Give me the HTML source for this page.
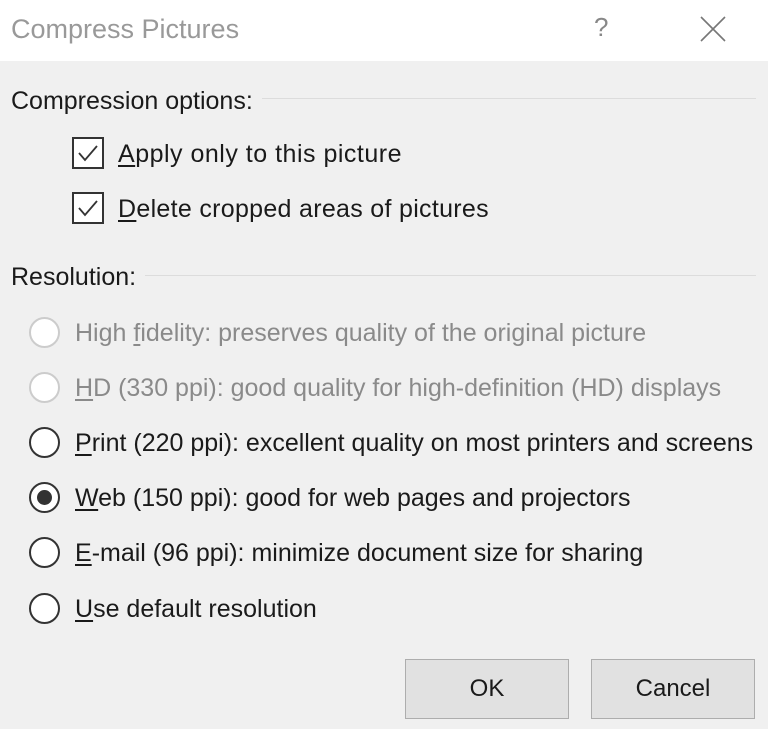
<!DOCTYPE html>
<html><head><meta charset="utf-8"><style>
*{margin:0;padding:0;box-sizing:border-box}
body{width:768px;height:729px;background:#f0f0f0;font-family:"Liberation Sans",sans-serif;color:#1a1a1a;position:relative;overflow:hidden}
.t{position:absolute;font-size:25px;line-height:30px;white-space:nowrap}
.title{position:absolute;left:0;top:0;width:768px;height:61px;background:#fff}
.hr{position:absolute;height:1px;background:#dcdcdc}
.cb{position:absolute;left:72px;width:32px;height:32px;border:2px solid #333;background:#fff}
.r{position:absolute;left:29px;width:31px;height:31px;border:2px solid #333;border-radius:50%;background:#fff}
.r.d{border-color:#ccc}
.g{color:#8a8a8a}
u{text-decoration:underline;text-underline-offset:3px}
.btn{position:absolute;top:659px;height:60px;width:164px;background:#e1e1e1;border:1.5px solid #adadad;font-size:24px;text-align:center;line-height:57px}
</style></head><body>
<div class="title"></div>
<div class="t" style="left:11px;top:14px;color:#999;font-size:27px">Compress Pictures</div>
<div class="t" style="left:594px;top:12px;color:#888;font-size:26px">?</div>
<svg style="position:absolute;left:700px;top:16px" width="26" height="26"><path d="M1 1L25 25M25 1L1 25" stroke="#777" stroke-width="1.6"/></svg>

<div class="t" style="left:11px;top:86px">Compression options:</div>
<div class="hr" style="left:262px;right:12px;top:98px"></div>
<div class="cb" style="top:137px"><svg width="28" height="28"><path d="M5 14L11 21L23 7" stroke="#333" stroke-width="1.8" fill="none"/></svg></div>
<div class="t" style="left:118px;top:139px;letter-spacing:0.5px"><u>A</u>pply only to this picture</div>
<div class="cb" style="top:192px"><svg width="28" height="28"><path d="M5 14L11 21L23 7" stroke="#333" stroke-width="1.8" fill="none"/></svg></div>
<div class="t" style="left:118px;top:194px;letter-spacing:0.3px"><u>D</u>elete cropped areas of pictures</div>

<div class="t" style="left:11px;top:262px">Resolution:</div>
<div class="hr" style="left:145px;right:12px;top:275px"></div>

<div class="r d" style="top:317px"></div>
<div class="t g" style="left:75px;top:318px">High <u>f</u>idelity: preserves quality of the original picture</div>
<div class="r d" style="top:372px"></div>
<div class="t g" style="left:75px;top:373px"><u>H</u>D (330 ppi): good quality for high-definition (HD) displays</div>
<div class="r" style="top:427px"></div>
<div class="t" style="left:75px;top:428px"><u>P</u>rint (220 ppi): excellent quality on most printers and screens</div>
<div class="r" style="top:482px"><div style="position:absolute;left:6px;top:6px;width:15px;height:15px;border-radius:50%;background:#333"></div></div>
<div class="t" style="left:75px;top:483px"><u>W</u>eb (150 ppi): good for web pages and projectors</div>
<div class="r" style="top:537px"></div>
<div class="t" style="left:75px;top:538px"><u>E</u>-mail (96 ppi): minimize document size for sharing</div>
<div class="r" style="top:593px"></div>
<div class="t" style="left:75px;top:594px"><u>U</u>se default resolution</div>

<div class="btn" style="left:405px">OK</div>
<div class="btn" style="left:591px">Cancel</div>
</body></html>
